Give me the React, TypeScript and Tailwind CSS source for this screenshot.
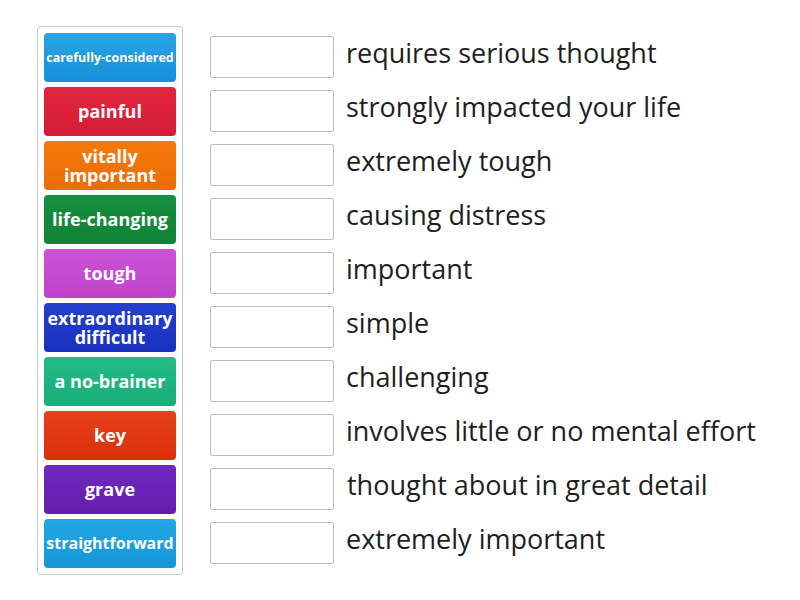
import React from "react";

const tiles: { label: React.ReactNode; cls: string; text: string }[] = [
  { label: "carefully-considered", cls: "bg-gradient-to-b from-[#2aa3e6] to-[#1790da]", text: "text-[12.5px]" },
  { label: "painful", cls: "bg-gradient-to-b from-[#e2263f] to-[#d41c36]", text: "text-[18px]" },
  { label: <>vitally<br />important</>, cls: "bg-gradient-to-b from-[#f57a0e] to-[#ec6c04]", text: "text-[18px]" },
  { label: "life-changing", cls: "bg-gradient-to-b from-[#16903f] to-[#0f8236]", text: "text-[18px]" },
  { label: "tough", cls: "bg-gradient-to-b from-[#cc52d6] to-[#c043ca]", text: "text-[18px]" },
  { label: <>extraordinary<br />difficult</>, cls: "bg-gradient-to-b from-[#2340cc] to-[#1a30bd]", text: "text-[18px]" },
  { label: "a no-brainer", cls: "bg-gradient-to-b from-[#22bb86] to-[#18ad78]", text: "text-[18px]" },
  { label: "key", cls: "bg-gradient-to-b from-[#e6401a] to-[#d9300a]", text: "text-[18px]" },
  { label: "grave", cls: "bg-gradient-to-b from-[#7029bd] to-[#621fae]", text: "text-[18px]" },
  { label: "straightforward", cls: "bg-gradient-to-b from-[#22a6e6] to-[#1796d9]", text: "text-[16px]" },
];

const defs = [
  "requires serious thought",
  "strongly impacted your life",
  "extremely tough",
  "causing distress",
  "important",
  "simple",
  "challenging",
  "involves little or no mental effort",
  "thought about in great detail",
  "extremely important",
];

export default function App() {
  return (
    <div
      className="w-[800px] h-[600px] bg-white flex items-start"
      style={{ fontFamily: '"Open Sans", "Noto Sans", sans-serif' }}
    >
      <div className="ml-[37px] mt-[26px] w-[146px] border border-[#c8c8c8] rounded-[4px] p-[6px] flex flex-col gap-[5px]">
        {tiles.map((t, i) => (
          <div
            key={i}
            className={`h-[49px] rounded-[4px] flex items-center justify-center text-center text-white font-bold leading-[19px] ${t.cls} ${t.text}`}
          >
            <span>{t.label}</span>
          </div>
        ))}
      </div>
      <div className="ml-[27px] mt-[36px] flex flex-col gap-[12px]">
        {defs.map((d, i) => (
          <div key={i} className="flex items-start h-[42px]">
            <div className="w-[124px] h-[42px] border border-[#bdbdbd] rounded-[2px] bg-white shrink-0" />
            <span
              className={`${i === 8 ? "ml-[13px]" : "ml-[12px]"} text-[27px] leading-[33px] text-[#1e1e1e] whitespace-nowrap`}
            >
              {d}
            </span>
          </div>
        ))}
      </div>
    </div>
  );
}
